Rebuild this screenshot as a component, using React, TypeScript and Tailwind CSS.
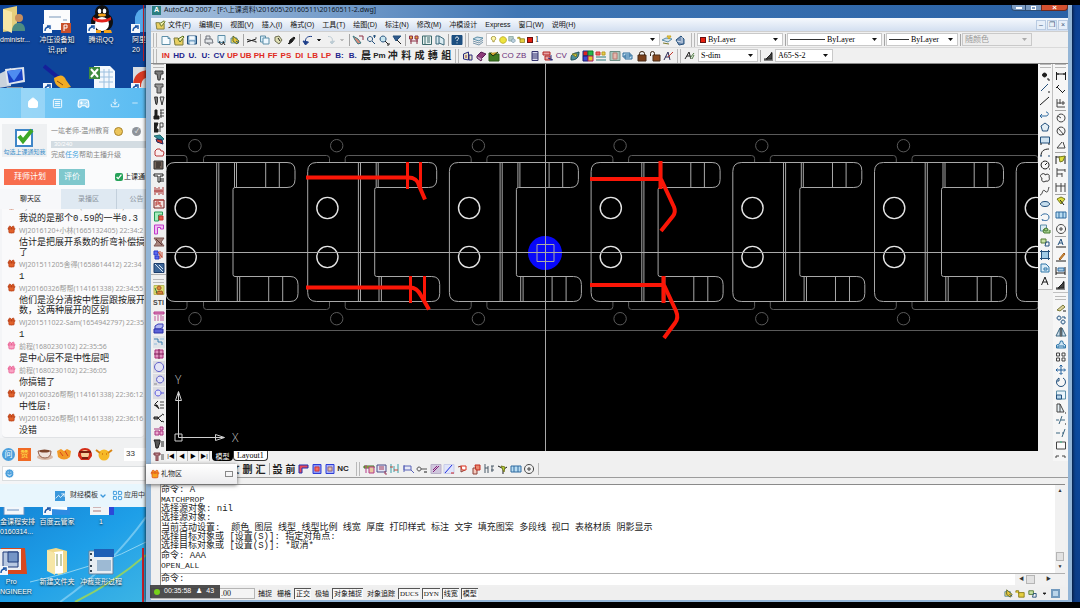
import type { ReactNode } from 'react';
import { ChevronDown, Gamepad2, Gift, House, LayoutGrid, Minus, Download, SquareMenu, TrendingUp, Smile } from 'lucide-react';

// [path, stroke, fill]
type Part = [string, string, string?];

const NAVY = '#23507c';
const INK = '#1d1d1d';
const STEEL = '#5d8fa8';
const MAROON = '#8c2f45';

const ICONS: Record<string, Part[]> = {
  // standard toolbar
  new: [['M2 2.5h6l2 2v6H2z', STEEL, '#f7fcff'], ['M8 2.5v2h2', STEEL]],
  open: [['M1 4h4l1 1h4v6H2z', '#7c7a3c', '#e8cf62'], ['M5 5l5-3 1 1-4 5z', '#59701f', '#f5f0b0']],
  save: [['M1.5 2h9v8h-9z', NAVY, '#7fa8c9'], ['M3.500 2.500h5v3h-5zM4 8h4v2H4z', '#d8e8f4', '#f4f9fd']],
  print: [['M3 5V2h4v3M2 5h7l1 4H2zM4 9l3 2', '#70757c', '#e4e7ea']],
  preview: [['M2 1.500h7v7H2z', STEEL, '#e5f3fa'], ['M4 7a2 2 0 1 0 3 0M7 8l2 3', INK]],
  publish: [['M2 4h6v5H2z', STEEL, '#f0d24c'], ['M4 2l6 5-2 3-4-3z', '#5b6b2b', '#e9c53a'], ['M7 7l3 2', NAVY]],
  cut: [['M1 5.500l9 2M1 8l9-3', INK], ['M9 4h2M9 8h2', '#666']],
  copy: [['M1.500 2h5v6h-5z', STEEL, '#d7ebf7'], ['M4 4h6v6H4z', STEEL, '#eef8ff']],
  paste: [['M3 3l4-1 3 4-3 4-4-3z', '#6d6d50', '#e0e0b4'], ['M6 4l2 3', INK]],
  brush: [['M3 10l3-3', INK, INK], ['M5 6l4-3 1 1-3 4-3 2z', INK, INK]],
  undo: [['M10 2.500C5 2 3 4 3.500 9', '#1e3f8a'], ['M1 7l2.500 4 3-3z', '#1e3f8a', '#1e3f8a']],
  redo: [['M3 2.500c4 0 5 2 4 6', '#bccbd3'], ['M9.500 7L7 10 5 8z', '#bccbd3', '#bccbd3']],
  caret: [['M4.500 5.500h3l-1.500 1.500z', INK, INK]],
  caretoff: [['M4.500 5.500h3l-1.500 1.500z', '#bbb', '#bbb']],
  pan: [['M1 2l5 3 3 4-3 1-3-4z', '#3b7a84', '#d98a7a'], ['M7 2h4v4', MAROON]],
  zoomrt: [['M5 2.500a2.500 2.500 0 1 0 .1 0M7 7l3 3M8 2h3M9.500 1v3', NAVY]],
  zoomwin: [['M5 2a3 3 0 1 0 .1 0', NAVY, '#c7e5ef'], ['M7 7l3 3M9 11h2V9', INK]],
  zoomprev: [['M2 2h8L5 7z', NAVY, '#315a8c'], ['M6 6l4 4', INK]],
  props: [['M1.500 2h3v3h-3zM7 2h3v3H7z', MAROON, '#e8aa3c'], ['M2 7h8M3 5v5M9 5v5', MAROON]],
  center: [['M1.500 2h9v8.500h-9zM4 2v8M6 4h3M6 6h3M6 8h3', '#3d6a6c', '#e6f1ef']],
  palette: [['M2 2h3v8H2zM5 2l5 3v6L5 9', '#3d6a7c', '#dcecf2']],
  help: [['M1 1.500h10v9H1z', '#1d4f80', '#1d4f80'], ['M4.500 4.500c0-2 3-2 3 0 0 1-1.500 1-1.500 2.500M6 8.500v.8', '#fff']],
  // layers
  layers: [['M1 5l4-2 6 1-4 3z', STEEL, '#cfe0ec'], ['M1 7l6 2 4-3M1 9l6 2 4-3', '#7895aa']],
  layerprev: [['M1 6l4-2 6 1-4 3z', STEEL, '#cfe0ec'], ['M2 9l6 1', '#7b7a2c'], ['M6 2l4 0-2 3z', '#c8a524', '#e8cc4a']],
  layerstate: [['M2 6l5-4 3 3v5l-5 1z', NAVY, '#7791b4'], ['M3 7l4 1M8 3v6', '#d8e3ee']],
  bulb: [['M6 2a2.500 2.500 0 0 1 1 5v2H5V7a2.500 2.500 0 0 1 1-5', '#9a8b2c', '#fff8a8']],
  sun: [['M6 2a4 4 0 1 0 .1 0', '#b5a51e', '#eee43e']],
  freeze: [['M1 2h6v6H1z', '#82a19c', '#b7cdc9'], ['M7 5a2.500 2.500 0 1 0 .1 0', '#7793a3', '#bcd2df']],
  unlock: [['M1 5V3h3v3M4 5h6v5H4z', '#8b7d1d', '#e5cf3e']],
  lock: [['M3.500 5V3.500a2.500 2 0 0 1 5 0V5', '#3b2614'], ['M2 5h8v6H2z', '#4a2d16', '#7a3f1a']],
  lockopen: [['M1.500 6V3.500a2 2 0 0 1 4 0V5', '#3b2614'], ['M4 5h7v6H4z', '#4a2d16', '#8a4a20']],
  // express row
  e1: [['M1.500 4l5-2v8l-5-1zM7 5h3v5H7z', '#2b2b7e', '#e8e3c0'], ['M4 5v3', MAROON]],
  e2: [['M2 6l4-4 5 2-5 5z', '#541b52', '#8c3a78'], ['M2 6v2l4 3 1-2', '#541b52', '#c89cc0']],
  e3: [['M1 3h3l1 1h6v7H1z', '#2c5a18', '#3f7a24'], ['M2 3l3 3 5-4', '#1a3110', '#c7a030']],
  e6: [['M3 1.500h6v9H3zM3 4h6M3 6h6M3 8h6', '#33336e', '#d9d9ee']],
  e7: [['M1 2h7v3H1zM3 6h5v4H3z', '#b02323', '#e6a0a0'], ['M9 5v6M6 8l5 2', '#282878']],
  e9: [['M2 8c0-5 5-5 8-6 0 5-2 8-8 8z', '#1e4f56', '#4a8c98'], ['M3 4h5l-1 3z', '#7a7a1e', '#dcd44c']],
  e10: [['M1 1h5v5H1z', '#16308a', '#d22'], ['M6 1h5v5H6z', '#137a2a', '#25b84a'], ['M1 6h5v5H1z', '#1b1b6a', '#3848d8'], ['M6 6h5v5H6z', '#a31864', '#e3c62a']],
  e11: [['M1 2h4v3H1z', '#c33', '#e66'], ['M7 2h3v3H7z', '#b99a22', '#e9cf46'], ['M1 7h10M1 10h10', '#2a7878']],
  e12: [['M1 1.500h10v9H1z', '#6d8f86', '#a9c6bc'], ['M4 3h4v6H4z', '#bb7b72', '#e5b8ae']],
  e13: [['M1 3h7v4H1zM3 5h7v4H3z', '#2d6a9a', '#bfe0f3']],
  astyle: [['M2 10l4-8 2 8M3.500 7h4', '#2a2a55'], ['M6 7l5-5', '#c2382c']],
  dimstyle: [['M1 9l4-7 2 7M3 6h3', INK], ['M6 8l4-5M8 9l2-4', '#4c7a3f']],
  tblstyle: [['M1 10h9M1 9h4l4-7', INK], ['M3 9l6-6v6z', INK, '#444']],
  // left column
  p1: [['M2 2h8v3H8l-1 6H5L4 5H2z', '#3a3a3a', '#7a7a7a'], ['M9 10h2', INK]],
  p2: [['M2 2h8v3H8v6H4V5H2z', '#444', '#999']],
  p3: [['M1.500 2h3v5l-1 3-1-3zM7 2h4L9 10z', '#3a3a3a', '#ddd'], ['M3 2v7', INK]],
  p4: [['M2 2h2v6h2v3H1V8h1z', INK, INK], ['M7 2h4M7 5h4M7 8h4M8 2v8', '#444']],
  p5: [['M1 2h4L3 8h2v3H1', INK, INK], ['M7 11V2h3v4H7', '#444']],
  p6: [['M1 3l6-1 4 4-3 2z', '#1e6a6a', '#2f8a9a'], ['M3 6l6 1 1 4-6-2z', '#20285e', '#c6372c']],
  p7: [['M2 9V5l2-2h3l1 2h2l1 2-1 3H3z', '#b8383a', '#fbeeee']],
  p8: [['M1 2h9v8H1z', '#333', '#75655a'], ['M3 4h5M3 6h5M3 8h4', '#1d1d1d']],
  p9: [['M1 2h9v2H7v6H5V4H1z', INK, '#fff'], ['M8 6v4M10 6v4', INK]],
  p10: [['M2 2v8M4 3v5M6 2v8M8 4v5M10 2v8M1 6h9', '#a33']],
  p11: [['M1 2h10v8H1z', '#7b2020', '#f1e2df'], ['M3 4v4M3 4h3v2H3M7 4v4h2M1 2h10', '#b93a34']],
  p12: [['M1.500 2h8v3h-4v6h-4z', '#259a55', '#a8ebbd'], ['M6 6h4v4H6z', '#c2372c', '#e65a4a']],
  p13: [['M1.500 2h9v4h-3V4.500h-3V11h-3z', '#c03ac8', '#f0bdf3']],
  p14: [['M1 2h10l-3 4 3 4H1l3-4z', '#7c5550', '#a8857e'], ['M3 3l6 6', '#5a3532']],
  p15: [['M1 2h4v4H1zM2 7h4v3H2z', '#2836c8', '#5c6af0'], ['M7 2v8M9 3v6M5 3l4 5', '#c2462f']],
  p16: [['M1 1.500h10v9H1z', '#1d3d6a', '#3d6698'], ['M2 2l8 8M6 3l4 4', '#d3e2f0']],
  q1: [['M1 1.500h10v9H1z', '#b8b858', '#dede70'], ['M6 2a2 2 0 1 0 .1 0M3 8l6-1 1 3H4z', '#a5522a', '#da8a3a'], ['M2 4l2 5', '#2f7a3a']],
  q3: [['M1 2h10v2H1z', '#b83a8c', '#d98abd'], ['M2 6v5M5 5v6M8 5v6M10 6v5', '#c25a9c']],
  q4: [['M2 3l3-2h5v3l-3 2H2z', '#3a3fb8', '#aeb4f0'], ['M1 6h9v4H1z', '#2b30a8', '#5d64d8']],
  q5: [['M0 0h12v12H0z', 'none', '#dfe3e8'], ['M1 3h4v3h4v3', '#3b7fb0'], ['M1 8h3M7 3h4', '#8fbadb']],
  q6: [['M2 2h8v8H2z', '#aa2c78', '#e092c0'], ['M1 6h10M6 1v10', '#7a1c52']],
  q7: [['M0 0h12v12H0z', 'none', '#dcdce2'], ['M6 1.500a4.500 4.500 0 1 0 .1 0', '#5a5ac8', '#e4e4f6']],
  q8: [['M0 0h12v12H0z', 'none', '#dcdce2'], ['M7 2a3.500 3.500 0 1 0 .1 0', '#5a5ac8', '#e4e4f6'], ['M1 10h3', '#888']],
  q9: [['M0 0h12v12H0z', 'none', '#dcdce2'], ['M5 3a3 3 0 1 0 .1 0M8 6h3', '#5a5ae0', '#e4e4f6']],
  q10: [['M2 5l3-3M1 6h3l2 4', INK, INK], ['M7 3h4M7 6h4M7 9h4', '#444']],
  q11: [['M1 6h4l4-3M5 6l4 4', INK], ['M1 5h4v2H1zM9 2l2 1M9 9l2 1', INK]],
  q12: [['M2 6h4v4H2zM7 2h3v3H7zM7 6h3v4H7z', '#a8347e', '#eaa9d0'], ['M1 4h5', '#a8347e']],
  q13: [['M1 2h6v2L5 10H3L2 4z', INK, '#555'], ['M8 4h3M8 6h3M8 8h3', INK]],
  q14: [['M1 2h6v2H5v6H3V4H1z', '#7a3d45', '#b9848a'], ['M8 4h3M8 6h3M8 8h3', '#555']],
  // draw
  point: [['M5.500 4a2 2 0 1 0 .1 0', INK, INK], ['M9 9v2h2', INK]],
  line: [['M2 9l7-7', NAVY], ['M9 10h2', INK]],
  line2: [['M1 10l9-8', INK]],
  pline: [['M1 8h6c3 0 3-4 0-4M3 6L1 8l2 2', '#2f6aa0']],
  polygon: [['M6 2l4 3-1.500 5h-5L2 5z', NAVY, '#e3eef5']],
  rect: [['M1.500 3h9v6h-9z', NAVY, '#cfe2f0'], ['M1 10h2M9 10h2', INK]],
  arc: [['M2 10c0-5 3-7 8-7', INK], ['M1 10h2M9 10h2', NAVY]],
  circle: [['M6 2a4 4 0 1 0 .1 0M6 6l2-2', INK], ['M10 10h1', INK]],
  cloud: [['M3 2c2-1 3 0 3 1 3-2 5 0 4 2 1 2 0 5-3 4-3 2-5 0-4-3-2-1-2-3 0-4z', '#333']],
  spline: [['M1 10c3 0 2-7 5-4s3-1 4-4', '#444']],
  ellipse: [['M6 3.500c6 0 6 5 0 5s-6-5 0-5', NAVY, '#c6deee']],
  earc: [['M2 5c1-3 8-3 8 1s-4 4-6 3M3 8l1 2', '#2f6aa0']],
  block: [['M1.500 2h6v6h-6z', STEEL, '#dcecf2'], ['M5 6a2 2 0 1 0 4 0 2 2 0 1 0-4 4h6V7', '#467a32', '#a5cf8e']],
  mkblock: [['M2 3h5v4H2z', '#557a35', '#c7e0a5'], ['M7 6h3v4H6z', NAVY]],
  hatch: [['M2.500 2.500h7v7h-7z', '#2f76a8', '#9ecae6'], ['M1 2.500h10M1 9.500h10M2.500 1v10M9.500 1v10', NAVY]],
  region: [['M2 10V2h5l3 3v5z', '#2f76a8', '#d8ebf7'], ['M5 6h3v2H5z', '#2f76a8']],
  text: [['M2.500 10L6 2l3 8M3.500 7h5', INK]],
  // dimension
  dlin: [['M1.500 2v8M10.500 2v8M2 4h8', INK], ['M3 3v2M9 3v2', INK]],
  dali: [['M2 4l6 6M1 5l3-3M7 10l3-3', INK]],
  dord: [['M2 2v8h8M5 2v5M8 4v4M2 6h8', '#444']],
  drad: [['M6 2a4 4 0 1 0 .1 0M6 6L3 4', '#444']],
  ddia: [['M6 2a4 4 0 1 0 .1 0M3 3l6 7', '#444']],
  dang: [['M2 9h8M2 9l5-6M8 3l2 6', '#444']],
  quick: [['M1 2v8M10 2v8M1 3h4', INK], ['M4 3l6-1-2 5-3 1z', '#767a1e', '#dede3c']],
  dbase: [['M2 1v9M2 3h8M2 7h5M10 2v3M7 6v4', '#444']],
  dcont: [['M1 2v9M6 2v9M10 2v9M1 5h9', '#444']],
  leader: [['M2 4l4-2 4 2-4 5z', '#767a1e', '#dede3c'], ['M5 5l4 5', INK]],
  tol: [['M1 3h10v6H1zM4 3v6M8 3v6', '#2f6aa0', '#b8dcf2']],
  cmark: [['M6 1.500a4.500 4.500 0 1 0 .1 0M6 4v4M4 6h4', '#444']],
  dedit: [['M3 8l3-6 2 6M4 6h3', NAVY], ['M1 10h10', INK]],
  dtedit: [['M1 10h10', INK], ['M4 8l5-6 1 1-5 6z', '#9c5a20', '#e8a83c']],
  dupd: [['M1 2v8M10 2v8M1 8h9', INK], ['M3 3h6v3H3z', '#2f6aa0', '#aed2ea']],
  // modify
  erase: [['M2 9l6-5 2 2-5 4z', '#7a7a3c', '#ddd39c'], ['M8 10h3', INK]],
  mcopy: [['M4 2a2 2 0 1 0 .1 0M8 6a2 2 0 1 0 .1 0M7 3h3v2', NAVY, '#e1eef6']],
  mirror: [['M5 2v8H1zM7 2v8h4z', '#3d6680', '#cfe0ec'], ['M6 1v10', INK]],
  offset: [['M1.500 9V6l3-1 1-3h2l1 3 2 1v3z', '#2f76a8', '#cfe6f5'], ['M3 9V7h6v2', '#2f76a8']],
  array: [['M1.500 2h3v3h-3zM7 2h3v3H7zM1.500 7h3v3h-3zM7 7h3v3H7z', '#444', '#f4f4f4']],
  move: [['M6 1v9M1 6h9M4.500 2.500L6 1l1.500 1.500M4.500 9L6 10.500 7.500 9M2.500 4.500L1 6l1.500 1.500M9 4.500L10.500 6 9 7.500', '#23609c']],
  rotate: [['M4 2a4.500 4.500 0 1 0 4 0M4 2v3H2', '#23507c']],
  scale: [['M1.500 2h9v8h-9z', '#5d8fa8', '#eaf5fb'], ['M1.500 6h5v4h-5z', '#23507c', '#b5d5ea']],
  stretch: [['M2 2h3v8H2zM5 2l4 8H5', '#444', '#e6f0f5'], ['M10 11h1', INK]],
  trim: [['M1 6h3M6 6h4M7 2L4 10', '#3d6680'], ['M10 10h1', INK]],
  extend: [['M1 6h4M7 6l2 0M10 2L7 10', '#3d6680']],
  brk: [['M1.500 3h9v7h-9z', '#444', '#fafafa'], ['M5 3h2', '#3b8']],
  join: [['M1 6V4h3M7 4h3v2', '#444']],
  // bottom toolbar
  b1: [['M1 10V2h9v3H4v5z', '#2030b0', '#e84a58']],
  b2: [['M2 1.500h8v9H2z', '#2e3ed8', '#8a96f2'], ['M4 4h4v4H4z', '#d83838', '#f07060']],
  b3: [['M2 1.500h8v9H2z', '#2e3ed8', '#a9b2f6'], ['M4 4h4v4H4z', '#9a6a78', '#e0c0a8']],
  b5: [['M1 3h10v2H1z', '#387028', '#c8c83c'], ['M3 2v8M6 4h5v6H6z', '#b5388a', '#e8c8a0']],
  b6: [['M1 2h9v7H1z', '#4a4a86', '#e3e3f3'], ['M3 4h5M3 6h5M9 8v3h2', '#a03a5a']],
  b7: [['M2 1v9M5 3v6M9 1v9', '#39a0a8'], ['M1 4h3M5 7h4', '#c24a3a']],
  b8: [['M1 3h7v4H1zM1 9V2M8 7l3 3', '#5a64b8', '#e7e9f7']],
  b9: [['M3 4a2 2 0 1 0 .1 0M5 6h6', '#555'], ['M8 9h3', INK]],
  b10: [['M1 1.500h10v9H1z', '#b9b0c8', '#cfc6dd'], ['M3 9l6-6M3 7l4-4', '#861e78']],
  b11: [['M1 1.500h10v9H1z', '#c9cde8', '#e0e4fa'], ['M2 10l7-8', '#1e2ee0'], ['M8 10h3', '#c22']],
  b12: [['M2 4l3-1v6l4-2', '#8a4038', '#f5dcd6'], ['M5 3h5v4H6z', '#d8301e', '#fff']],
  b13: [['M3 5h4v6H3z', '#8a4038', '#f5c9bc'], ['M5 2h5v5H6z', '#c22a1e', '#e88a70']],
  b14: [['M2 1v9M5 3v7M2 5h3M8 3h3M8 7h3M9 3v6', '#4a5a68']],
  b15: [['M1 3l6 3 3-2M6 6v5', INK], ['M4 3l4 1-1 5z', '#767a1e', '#b8d83c']],
};

function Ico({ name, size = 12 }: { name: string; size?: number }) {
  return (
    <svg width={size} height={size} viewBox="0 0 12 12" className="shrink-0" aria-hidden="true">
      {ICONS[name].map(([d, stroke, fill], i) => (
        <path key={i} d={d} stroke={stroke} fill={fill ?? 'none'} strokeWidth="1" />
      ))}
    </svg>
  );
}

function Tool({ name }: { name: string }) {
  return (
    <button
      type="button"
      aria-label={name}
      className={`flex shrink-0 items-center justify-center ${name.startsWith('caret') ? 'w-[10px]' : 'w-[13px]'}`}
    >
      <Ico name={name} />
    </button>
  );
}

// a row of tools, '|' is a separator
function Tools({ names }: { names: string[] }) {
  return (
    <>
      {names.map((n, i) =>
        n === '|' ? <span key={i} className="ml-[2px] mr-px h-3 w-px shrink-0 bg-[#a5a5a5]" /> : <Tool key={i} name={n} />
      )}
    </>
  );
}

function Grip() {
  return <span className="mx-[2px] h-[14px] w-[4px] shrink-0 border-x border-[#b9b9b9]" />;
}

function HGrip() {
  return <span className="mx-auto mb-px h-[4px] w-[11px] shrink-0 border-y border-[#b9b9b9]" />;
}

function VTools({ names, className }: { names: string[]; className: string }) {
  return (
    <div className={`flex shrink-0 flex-col items-center ${className}`}>
      {names.map((n, i) =>
        n === '|' ? (
          <span key={i} className="h-px w-[11px] shrink-0 bg-[#a5a5a5]" />
        ) : (
          <button key={i} type="button" aria-label={n} className="flex min-h-0 flex-1 items-center justify-center">
            {n === 'STI' ? <span className="text-[7px] font-bold text-[#444]">STI</span> : <Ico name={n} />}
          </button>
        )
      )}
    </div>
  );
}

interface PickerProps {
  label: string;
  value: string;
  className: string;
  lead?: ReactNode;
  disabled?: boolean;
}

function Picker({ label, value, className, lead, disabled }: PickerProps) {
  return (
    <label
      className={`flex h-[13px] shrink-0 items-center gap-[2px] border border-[#c9c9c9] px-[2px] ${disabled ? 'bg-[#eeeeee]' : 'bg-white'} ${className}`}
    >
      {lead}
      <select
        aria-label={label}
        disabled={disabled}
        className={`min-w-0 flex-1 appearance-none bg-transparent font-['Liberation_Serif','Noto_Sans_CJK_SC',serif] text-[8px] leading-[11px] ${disabled ? 'text-[#999]' : 'text-black'}`}
      >
        <option>{value}</option>
      </select>
      <svg width="5" height="3" viewBox="0 0 5 3" className="mr-[2px] shrink-0">
        <path d="M0 0h5L2.500 3z" fill={disabled ? '#aaa' : '#111'} />
      </svg>
    </label>
  );
}

const MENUS = ['文件(F)', '编辑(E)', '视图(V)', '插入(I)', '格式(O)', '工具(T)', '绘图(D)', '标注(N)', '修改(M)', '冲模设计', 'Express', '窗口(W)', '说明(H)'];

const RED = 'text-[8px] text-[#e02a20]';
const BLUE = 'text-[8px] text-[#22248c]';
const BLACK = 'text-[10px] text-[#222]';

const DIE_TOOLS: [string, string][] = [
  ['IN', RED], ['HD', BLUE], ['U.', BLUE], ['U:', BLUE], ['CV', BLUE], ['UP', RED], ['UB', RED], ['PH', RED],
  ['FF', RED], ['PS', RED], ['DI', RED], ['LB', RED], ['LP', RED], ['B:', BLUE], ['B.', BLUE], ['晨', BLACK],
  ['Pm', 'text-[8px] text-[#222]'], ['冲', BLACK], ['料', BLACK], ['成', BLACK], ['轉', BLACK], ['組', BLACK],
];

const EXPRESS_TOOLS = ['e1', 'e2', 'e3', 'CO', 'ZB', 'e6', 'e7', 'CV', 'e9', 'e10', 'e11', 'e12', 'e13', 'lock', 'lockopen', 'astyle'];

function TitleBar() {
  return (
    <header className="flex h-[13px] items-start bg-linear-to-r from-[#a9c2de] via-[#3f76b4] via-40% to-[#2a62a6]">
      <span className="ml-[1px] mt-[1px] flex h-[9px] w-[9px] items-center justify-center bg-[#2c7f80] text-[7px] font-bold text-white">A</span>
      <h1 className="ml-[3px] whitespace-nowrap font-['Noto_Sans','Noto_Sans_CJK_SC',sans-serif] text-[7px] leading-[10px] text-[#10161e]">
        AutoCAD 2007 - [F:\上课资料\201605\20160511\20160511-2.dwg]
      </h1>
      <div className="ml-auto flex h-[6px] text-white">
        <button type="button" aria-label="最小化" className="flex w-[15px] items-end justify-center rounded-bl border-x border-b border-[#2d4d74] bg-[#7c9cc2] pb-px">
          <span className="h-[2px] w-[6px] bg-white" />
        </button>
        <button type="button" aria-label="还原" className="flex w-[15px] items-center justify-center border-b border-[#2d4d74] bg-[#7c9cc2]">
          <span className="h-[4px] w-[5px] border border-white" />
        </button>
        <button type="button" aria-label="关闭" className="flex w-[27px] items-center justify-center rounded-br border-x border-b border-[#6b2a20] bg-[#d4512f] text-[8px] font-bold leading-[5px]">
          ×
        </button>
      </div>
    </header>
  );
}

function MenuBar() {
  return (
    <nav className="flex h-[13px] items-center bg-linear-to-b from-[#f6f9fd] to-[#d3dff0] pl-[4px]">
      <Ico name="open" size={11} />
      <div className="ml-[2px] flex gap-[8px] whitespace-nowrap text-[7px] leading-[12px] text-[#111]">
        {MENUS.map((m) => (
          <button key={m} type="button">{m}</button>
        ))}
      </div>
      <div className="ml-auto flex gap-px text-[7px] leading-[8px] text-[#3e5878]">
        {['–', '❐', '×'].map((g) => (
          <button key={g} type="button" className="h-[10px] w-[10px] border border-[#b9cbe2] bg-[#e7eff9]">{g}</button>
        ))}
      </div>
    </nav>
  );
}

function Toolbars() {
  return (
    <>
      <div className="flex h-4 items-center border-t border-[#cfcfcf]">
        <Grip />
        <Tools
          names={['new', 'open', 'save', '|', 'print', 'preview', 'publish', '|', 'cut', 'copy', 'paste', 'brush', '|', 'undo', 'caret', 'redo', 'caretoff', '|',
            'pan', 'zoomrt', 'zoomwin', 'zoomprev', '|', 'props', 'center', 'palette', '|', 'help']}
        />
        <Grip />
        <Tools names={['layers']} />
        <Picker
          label="图层"
          value="1"
          className="ml-[2px] w-[174px]"
          lead={
            <span className="flex items-center">
              <Ico name="bulb" size={9} />
              <Ico name="sun" size={10} />
              <Ico name="freeze" size={9} />
              <Ico name="unlock" size={9} />
              <i className="ml-px h-[6px] w-[6px] border border-[#611] bg-[#e8200f]" />
            </span>
          }
        />
        <Tools names={['layerprev', 'layerstate']} />
        <span className="w-[3px]" />
        <Grip />
        <Picker label="颜色" value="ByLayer" className="w-[86px]" lead={<i className="h-[6px] w-[6px] border border-[#611] bg-[#e8200f]" />} />
        <Tools names={['|']} />
        <Picker label="线型" value="ByLayer" className="w-[95px]" lead={<i className="h-px w-[35px] bg-[#333]" />} />
        <Tools names={['|']} />
        <Picker label="线宽" value="ByLayer" className="w-[72px]" lead={<i className="h-px w-[20px] bg-[#333]" />} />
        <Tools names={['|']} />
        <Picker label="打印样式" value="随颜色" className="w-[70px]" disabled />
      </div>
      <div className="flex h-4 items-center border-t border-[#dadada]">
        <Grip />
        <div className="flex w-[294px]">
          {DIE_TOOLS.map(([t, c], i) => (
            <button key={i} type="button" className={`w-0 flex-1 text-center font-['Liberation_Sans','Noto_Sans_CJK_SC',sans-serif] font-bold leading-[12px] ${c}`}>
              {t}
            </button>
          ))}
        </div>
        <Grip />
        <div className="flex w-[214px]">
          {EXPRESS_TOOLS.map((t) => (
            <button key={t} type="button" aria-label={t} className="flex w-[13px] flex-1 items-center justify-center text-[8px] text-[#6b2f7a]">
              {ICONS[t] ? <Ico name={t} /> : t}
            </button>
          ))}
        </div>
        <Grip />
        <Tools names={['dimstyle']} />
        <Picker label="标注样式" value="S-dim" className="ml-[2px] w-[60px]" />
        <Tools names={['|', 'tblstyle']} />
        <Picker label="文字样式" value="A65-S-2" className="w-[58px]" />
      </div>
    </>
  );
}

// one station of the strip layout
const PITCH = 141.7;
const STATIONS = [0, 1, 2, 3, 4, 5, 6];

function Station({ n }: { n: number }) {
  return (
    <g transform={`translate(${n * PITCH} 0)`} fill="none">
      <g stroke="#5a5a5a">
        <circle cx="29" cy="82.700" r="6.200" />
        <circle cx="29" cy="255.700" r="6.200" />
        <path d="M37.500 99.500v-4q0-3 3-3h120q3 0 3 3v4M37.500 238.500v5q0 3 3 3h120q3 0 3-3v-5" />
      </g>
      <g stroke="#a8a8a8">
        <path d="M9 99.500h112q8 0 8 8v9q0 8-8 8H69q-2 0-2 2v85q0 2 2 2h55q8 0 8 8v9q0 8-8 8H9q-9 0-9-9v-121q0-9 9-9z" />
        <path d="M50.700 99.500v139M52.800 99.500v139M68.500 99.500v25M70.500 99.500v25M99.700 99.500v25M113.300 99.500v25" />
        <path d="M71.300 213.500v25M73.700 213.500v25M102.700 213.500v25M116.700 213.500v25" />
      </g>
      <g stroke="#e4e4e4" strokeWidth="1.400">
        <circle cx="19.700" cy="145" r="10.600" />
        <circle cx="19.700" cy="194" r="10.600" />
      </g>
    </g>
  );
}

function Drawing() {
  return (
    <div className="relative min-h-0 flex-1 bg-black">
      <svg className="absolute inset-0 h-full w-full" viewBox="0 1 872 385" preserveAspectRatio="xMinYMin meet">
        <path d="M0 71.500h872M0 267.500h872M0 92.500h18q3 0 3 3v4M0 246.500h18q3 0 3-3v-5" stroke="#5a5a5a" fill="none" />
        {STATIONS.map((n) => (
          <Station key={n} n={n} />
        ))}
        <circle cx="379" cy="190" r="17" fill="#0808fa" />
        <path d="M379.500 0v390M0 189.500h872M371 181.500h17v17h-17z" stroke="#a9a9a9" fill="none" />
        {/* pen marks */}
        <g stroke="#fb1607" strokeWidth="4" fill="none" strokeLinejoin="round">
          <path d="M140 114.500h102c8 0 10 4 11 8l6 14" />
          <path d="M140 224.500h104c6 0 9 4 11 8l8 14" />
          <path d="M241.500 99v27M254.500 99v27M244.500 213v27M258.500 213v27" strokeWidth="3" />
          <path d="M424 116h71M494.500 98v28" />
          <path d="M495 116l13 28q2 5-1 9l-12 15" />
          <path d="M424 222h74M497.500 213v27" />
          <path d="M498 222l12 26q3 7-1 12l-11 15" />
        </g>
        <g stroke="#cfcfcf" fill="none">
          <path d="M9 371h7v7H9zM12.500 374.500V329M12.500 374.500H58M9.500 337.500l3-9 3 9zM49.500 371.500l9 3-9 3z" />
        </g>
        <g fill="#c4c4c4" fontFamily="'Open Sans', sans-serif" fontWeight="300" fontSize="12">
          <text x="9" y="321">Y</text>
          <text x="66" y="379">X</text>
        </g>
      </svg>
    </div>
  );
}

const LEFT_TOP = ['p1', 'p2', 'p3', 'p4', 'p5', 'p6', 'p7', 'p8', 'p9', 'p10', 'p11', 'p12', 'p13', 'p14', 'p15', 'p16'];
const LEFT_BOTTOM = ['q1', 'STI', 'q3', 'q4', 'q5', 'q6', 'q7', 'q8', 'q9', 'q10', 'q11', 'q12', 'q13', 'q14'];
const DRAW = ['point', 'line', 'line2', 'pline', 'polygon', 'rect', 'arc', 'circle', 'cloud', 'spline', 'ellipse', 'earc', 'block', 'mkblock', 'hatch', 'region', 'text'];
const DIMENSION = ['dlin', 'dali', 'dord', '|', 'drad', 'ddia', 'dang', '|', 'quick', 'dbase', 'dcont', '|', 'leader', 'tol', 'cmark', '|', 'dedit', 'dtedit', 'dupd', '|', 'tblstyle'];
const MODIFY = ['erase', 'mcopy', 'mirror', 'offset', 'array', 'move', 'rotate', 'scale', 'stretch', 'trim', 'extend', 'brk', 'join'];

function Workspace() {
  return (
    <div className="flex min-h-0 grow basis-0 overflow-hidden border-t border-[#8a8a8a]">
      <div className="flex w-[15px] flex-col">
        <div className="flex flex-col border-b border-[#b0b0b0]">
          <HGrip />
          <VTools names={LEFT_TOP} className="h-[205px]" />
        </div>
        <div className="flex flex-col pt-[4px]">
          <HGrip />
          <VTools names={LEFT_BOTTOM} className="h-[179px]" />
        </div>
      </div>
      <div className="flex min-w-0 flex-1 flex-col">
        <Drawing />
        <div className="flex h-[10px] shrink-0 items-stretch text-[7px] leading-[9px]">
          {['|◀', '◀', '▶', '▶|'].map((g) => (
            <button key={g} type="button" className="w-[11px] border-r border-[#bbb] bg-[#f4f4f4] text-[6px] text-black">{g}</button>
          ))}
          <button type="button" className="ml-[2px] w-[21px] rounded-b-sm bg-black text-center text-white">模型</button>
          <button type="button" className="rounded-b-sm border-x border-b border-[#333] bg-white px-[3px] font-['Liberation_Serif',serif] text-[8px] leading-[8px] text-black">Layout1</button>
        </div>
      </div>
      <div className="flex w-[30px] items-start">
        <div className="flex w-[15px] flex-col border-b border-r border-[#c0c0c0] bg-[#f6f6f6] pb-[2px]">
          <HGrip />
          <VTools names={DRAW} className="h-[218px]" />
        </div>
        <div className="flex flex-1 flex-col">
          <div className="flex flex-col border-b border-[#c0c0c0] bg-[#f6f6f6]">
            <HGrip />
            <VTools names={DIMENSION} className="h-[223px]" />
          </div>
          <div className="flex flex-col bg-[#f6f6f6] pt-[3px]">
            <HGrip />
            <VTools names={MODIFY} className="h-[163px]" />
          </div>
        </div>
      </div>
    </div>
  );
}

const BLOCK = "w-[13px] text-center font-['Noto_Sans_CJK_SC',sans-serif] text-[10px] font-bold leading-[12px] text-[#222]";

function BottomToolbar() {
  return (
    <div className="flex h-[17px] items-center border-b border-[#9c9c9c] pl-[77px]">
      {['文', '删', '汇'].map((c) => (
        <button key={c} type="button" className={BLOCK}>{c}</button>
      ))}
      <Tools names={['|']} />
      {['設', '前'].map((c) => (
        <button key={c} type="button" className={BLOCK}>{c}</button>
      ))}
      <Tools names={['b1', 'b2', 'b3']} />
      <button type="button" className="w-[14px] text-center text-[8px] font-bold text-[#222]">NC</button>
      <span className="w-[4px]" />
      <Grip />
      <div className="flex w-[174px] justify-between">
        <Tools names={['b5', 'b6', 'b7', 'b8', 'b9', 'b10', 'b11', 'b12', 'b13', 'b14', 'b15', 'tol', 'cmark']} />
      </div>
      <span className="ml-[2px] h-3 w-px bg-[#b9b9b9]" />
    </div>
  );
}

const HISTORY = [
  '命令: A',
  'MATCHPROP',
  '选择源对象: nil',
  '选择源对象:',
  '当前活动设置:  颜色 图层 线型 线型比例 线宽 厚度 打印样式 标注 文字 填充图案 多段线 视口 表格材质 阴影显示',
  '选择目标对象或 [设置(S)]: 指定对角点:',
  '选择目标对象或 [设置(S)]: *取消*',
  '命令: AAA',
  'OPEN_ALL',
];

function CommandWindow() {
  return (
    <div className="mt-[6px] ml-[9px] mr-[3px] border-l border-t border-[#8a8a8a] bg-white font-['Liberation_Mono','Noto_Sans_CJK_SC',monospace] text-[9px] text-[#222]">
      <div className="flex h-[88px]">
        <div className="flex h-[85px] min-w-0 flex-1 flex-col justify-between overflow-hidden pt-px">
          {HISTORY.map((line, i) => (
            <p key={i} className={`whitespace-pre leading-[9px] ${/^[A-Z_]+$/.test(line) ? 'text-[8px]' : ''}`}>{line}</p>
          ))}
        </div>
        <div className="flex w-[10px] flex-col items-center bg-[#f1f1f1] py-[3px] text-[5px] leading-[6px] text-[#333]">
          <span>▲</span>
          <span className="mt-auto mb-[3px] h-[9px] w-2 border border-[#b5b5b5] bg-[#e2e2e2]" />
          <span>▼</span>
        </div>
      </div>
      <div className="flex h-[12px] items-center border-t border-[#b0b0b0]">
        <label htmlFor="command">命令:</label>
        <input id="command" className="ml-1 h-[10px] min-w-0 flex-1 bg-transparent outline-none" />
        <div className="flex h-full w-[40px] items-center justify-between bg-[#f1f1f1] px-[4px] text-[5px] text-[#333]">
          <span>◀</span>
          <span className="mr-[10px] h-[9px] w-[9px] border border-[#b5b5b5] bg-[#e2e2e2]" />
          <span>▶</span>
        </div>
        <span className="w-[10px] self-stretch bg-[#f1f1f1]" />
      </div>
    </div>
  );
}

const MODES: [string, boolean][] = [
  ['捕捉', false], ['栅格', false], ['正交', true], ['极轴', false], ['对象捕捉', true],
  ['对象追踪', false], ['DUCS', true], ['DYN', true], ['线宽', true], ['模型', true],
];

function StatusBar() {
  return (
    <footer className="mt-[2px] flex h-[13px] items-center bg-[#efefef] text-[7px] text-[#111]">
      <span className="h-[11px] w-[104px] border border-[#b5b5b5] bg-[#f4f4f4] pl-[69px] font-['Liberation_Serif',serif] text-[8px] leading-[10px]">.00</span>
      <div className="ml-[1px] flex gap-[2px]">
        {MODES.map(([m, on]) => (
          <button
            key={m}
            type="button"
            className={`h-[11px] border-l border-t px-px font-['Liberation_Serif','Noto_Sans_CJK_SC',serif] leading-[10px] ${on ? 'border-[#555] bg-[#f8f8f8]' : 'border-transparent'}`}
          >
            {m}
          </button>
        ))}
      </div>
      <div className="ml-auto mr-[8px] flex items-center gap-px">
        <Ico name="publish" size={11} />
        <Ico name="unlock" size={11} />
        <Ico name="mkblock" size={11} />
        <Ico name="caret" size={11} />
        <span className="h-[9px] w-[9px] border-2 border-[#7199be] bg-[#b9d4ea]" />
      </div>
    </footer>
  );
}

function AutoCad() {
  return (
    <section className="relative flex min-w-0 flex-1 flex-col border-b-2 border-l-[5px] border-r-[4px] border-[#93b5d6] bg-[#f0f0f0] shadow-[0_0_4px_#000]">
      <TitleBar />
      <MenuBar />
      <Toolbars />
      <Workspace />
      <BottomToolbar />
      <CommandWindow />
      <StatusBar />
      <div className="absolute bottom-[116px] -left-[5px] flex h-5 w-[91px] items-center bg-linear-to-b from-white to-[#ececee] px-[4px] text-[7px] text-[#222] shadow-[0_1px_4px_#666]">
        <Gift size={10} className="shrink-0 fill-[#f6a21d] text-[#e0561b]" />
        <span className="ml-[1px]">礼物区</span>
        <button type="button" aria-label="展开" className="ml-auto h-[6px] w-2 border border-[#888]" />
      </div>
      <div className="absolute bottom-[2px] -left-px flex h-[13px] w-[70px] items-center whitespace-nowrap bg-[#3c3c3ce6] px-[4px] text-[7px] text-white">
        <span className="h-[6px] w-[6px] shrink-0 rounded-full bg-[#76d11b]" />
        <span className="ml-[4px]">00:35:58</span>
        <span className="ml-[5px]">♟</span>
        <span className="ml-[4px]">43</span>
      </div>
    </section>
  );
}

function Shortcut() {
  return (
    <g>
      <path d="M0 19h9v9H0z" fill="#f4f7fb" />
      <path d="M2 26q0-4 4-4M4 21h3v3" stroke="#1c57a8" strokeWidth="1.500" fill="none" />
    </g>
  );
}

const DESK: Record<string, ReactNode> = {
  admin: (
    <>
      <path d="M4 4l14-3v24L4 27z" fill="#e6cf7c" />
      <path d="M4 4l9 3v21l-9-4z" fill="#f6e6a6" />
      <circle cx="20" cy="13" r="4" fill="#c78e5e" />
      <path d="M13 26c0-11 14-11 13 0z" fill="#4d8c83" />
    </>
  ),
  ppt: (
    <>
      <path d="M1 5h26v20H1z" fill="#fbfcfd" />
      <path d="M6 12h12M20 15h4" stroke="#7897b9" />
      <path d="M18 18h10v10H18z" fill="#c8502b" />
      <path d="M21 26v-6h3v3h-3" stroke="#fff" fill="none" />
      <Shortcut />
    </>
  ),
  qq: (
    <>
      <ellipse cx="15" cy="17" rx="11" ry="10" fill="#111" />
      <circle cx="15" cy="7" r="7" fill="#111" />
      <ellipse cx="15" cy="19" rx="7" ry="7" fill="#fff" />
      <path d="M6 12q9 5 18 0v3q-9 5-18 0z" fill="#e3231b" />
      <ellipse cx="12.500" cy="6" rx="1.800" ry="2.500" fill="#fff" />
      <ellipse cx="17.500" cy="6" rx="1.800" ry="2.500" fill="#fff" />
      <ellipse cx="15" cy="10" rx="4" ry="1.500" fill="#f5a21b" />
      <path d="M7 25h7v3H6zM17 25h7l1 3h-8z" fill="#f5a21b" />
      <Shortcut />
    </>
  ),
  ali: (
    <>
      <path d="M4 12q2-9 12-9v24H4z" fill="#55a8ea" />
      <Shortcut />
    </>
  ),
  computer: (
    <>
      <path d="M0 10l12-6v18L0 24z" fill="#c9d2dc" />
      <path d="M6 5l19-2 1 15-18 3z" fill="#dfe5ee" />
      <path d="M8 7l15-2 1 11-14 3z" fill="#1942c4" />
      <path d="M8 7l15-2-8 12z" fill="#4f8cf0" />
      <path d="M8 23h16v3H6z" fill="#8d97a3" />
    </>
  ),
  pen: (
    <>
      <path d="M1 2l16 13" stroke="#15209a" strokeWidth="4" />
      <path d="M11 14q9-6 12 2l5 7-8 2q-9-3-9-11z" fill="#f2ac24" />
      <path d="M14 17l6 4" stroke="#8a4d10" />
      <Shortcut />
    </>
  ),
  excel: (
    <>
      <path d="M7 2h16l5 5v21H7z" fill="#f3f8fd" />
      <path d="M12 8h14M12 13h14M12 18h14M17 5v20M22 5v20" stroke="#9cc0df" />
      <path d="M2 3h11v12H2z" fill="#3e8a3e" />
      <path d="M4 5l7 8M11 5l-7 8" stroke="#fff" strokeWidth="2" />
    </>
  ),
  player: (
    <>
      <path d="M2 3h20v22H2z" fill="#d9dde2" />
      <path d="M2 22q0-16 18-16v7q-10 0-10 10z" fill="#d93a24" />
      <Shortcut />
    </>
  ),
  plan: <path d="M5 6h20v22H5zM8 14h12M8 19h12M8 23h12" stroke="#6b90c0" fill="#f3f7fb" />,
  cloud: (
    <>
      <path d="M3 6h24v22H3z" fill="#2e8be2" />
      <path d="M8 22q0-6 5-6 3-6 8 1 4 1 3 6z" fill="#fff" />
      <Shortcut />
    </>
  ),
  doc: (
    <>
      <path d="M3 6h20v22H3z" fill="#f2f4f6" />
      <path d="M6 20h8M6 24h8" stroke="#a77" />
      <path d="M22 16h5v12h-5z" fill="#2c48d8" />
    </>
  ),
  proe: (
    <>
      <path d="M2 1h24l2 26H2z" fill="#d8481e" />
      <path d="M1 2h21v21H1z" fill="#eceff4" />
      <path d="M4 5h15v15H4z" fill="#b7c8e2" stroke="#1f3b7a" />
      <path d="M9 5h10v10H9z" fill="#7595c6" stroke="#1f3b7a" />
      <Shortcut />
    </>
  ),
  folder: (
    <>
      <path d="M4 3l9-2 11 3v21l-9 3z" fill="#f0d98a" />
      <path d="M11 5l9-1v22l-9 1z" fill="#fff" />
      <path d="M4 3l8 3v22l-8-4z" fill="#f6e6a6" />
      <path d="M14 7v12M18 7v12" stroke="#8a9a55" />
    </>
  ),
  video: (
    <>
      <path d="M2 4h24v23H2z" fill="#e7edf3" stroke="#62809c" />
      <path d="M7 2h20v8H7z" fill="#1d5fb6" />
      <path d="M10 13h14v11H10z" fill="#9dbad4" />
      <path d="M3 7h2M3 13h2M3 19h2M3 24h2" stroke="#345" strokeWidth="2" />
    </>
  ),
};

interface DeskIconProps {
  icon: string;
  label: string;
  // columns that run off the desktop's edge keep their label inside
  edge?: boolean;
}

function DeskIcon({ icon, label, edge }: DeskIconProps) {
  return (
    <div className="flex w-11 shrink-0 flex-col items-center">
      <svg width="28" height="28" viewBox="0 0 28 28">{DESK[icon]}</svg>
      <span
        className={`mt-[2px] whitespace-pre text-[7px] leading-[10px] text-white [text-shadow:0_1px_2px_#000] ${edge ? 'self-start pl-[9px]' : 'text-center'}`}
      >
        {label}
      </span>
    </div>
  );
}

interface Message {
  who: string;
  text: string;
  pink?: boolean;
}

const MESSAGES: Message[] = [
  { who: 'WJ201511022-Sam(1654942797) 22:3', text: '我说的是那个0.59的一半0.3' },
  { who: 'WJ2016120+小林(1665132405) 22:34:2', text: '估计是把展开系数的折弯补偿搞\n了' },
  { who: 'WJ201511205舍得(1658614412) 22:34', text: '1' },
  { who: 'WJ20160326帮帮(114161338) 22:34:55', text: '他们是没分清按中性层跟按展开\n数，这两种展开的区别' },
  { who: 'WJ201511022-Sam(1654942797) 22:35', text: '1' },
  { who: '前程(1680230102) 22:35:56', text: '是中心层不是中性层吧', pink: true },
  { who: '前程(1680230102) 22:36:05', text: '你搞错了', pink: true },
  { who: 'WJ20160326帮帮(114161338) 22:36:12', text: '中性层!' },
  { who: 'WJ20160326帮帮(114161338) 22:36:16', text: '没错' },
];

function ChatWindow() {
  return (
    <section className="flex min-h-0 flex-1 flex-col overflow-hidden whitespace-nowrap bg-[#f4f5f7] text-[8px]">
      <header className="flex h-[30px] shrink-0 items-center bg-linear-to-r from-[#7ccbf5] to-[#5bbcf2] text-white">
        <span className="ml-[21px] flex h-full w-6 items-center justify-center bg-white/25">
          <House size={12} className="fill-white" />
        </span>
        <SquareMenu size={11} className="ml-[7px]" />
        <Gamepad2 size={13} className="ml-[14px] fill-white/40" />
        <Download size={10} className="ml-[20px]" />
        <Minus size={8} className="ml-[11px]" />
      </header>
      <div className="flex h-[45px] shrink-0 items-start gap-[4px] bg-[#fafbfc] pl-[2px] pt-[6px]">
        <div className="flex w-[45px] shrink-0 flex-col items-center bg-[#eef0f2] pt-[3px]">
          <svg width="22" height="20" viewBox="0 0 22 20">
            <path d="M2 3h16v16H2z" fill="#fff" stroke="#3f86c8" strokeWidth="2" />
            <path d="M5 9l4 5 9-11" stroke="#3da827" strokeWidth="4" fill="none" />
          </svg>
          <span className="text-[6px] leading-[10px] text-[#3b8ec9]">勾选上课通知我</span>
        </div>
        <div className="flex min-w-0 flex-1 flex-col text-[#888]">
          <div className="flex h-[14px] items-center text-[7px]">
            一竑老师-温州教育
            <span className="ml-[5px] h-[9px] w-[9px] shrink-0 rounded-full border border-[#a9842c] bg-[#ecc55b]" />
            <span className="ml-[9px] h-[9px] w-[9px] shrink-0 rounded-full bg-[#8e9399] text-center text-[6px] leading-[9px] text-white">✓</span>
          </div>
          <div className="mt-[3px] h-[7px] bg-[#d3dce2] pl-[3px] text-[6px] leading-[7px] text-white">30/240</div>
          <p className="text-[7px] leading-[13px]">
            完成<a href="#task" className="text-[#45a5dc]">任务</a>帮助主播升级
          </p>
        </div>
      </div>
      <div className="flex h-[26px] shrink-0 items-center gap-[3px] bg-[#fafbfc] pl-[4px] pt-[2px] text-white">
        <button type="button" className="h-4 w-[52px] bg-[#f86e4e]">拜师计划</button>
        <button type="button" className="h-4 w-[26px] bg-[#7fc8cd]">评价</button>
        <label className="ml-[27px] flex items-center text-[7px] text-[#222]">
          <input type="checkbox" defaultChecked className="mr-px h-[8px] w-[8px] accent-[#26a259]" />
          上课通
        </label>
      </div>
      <div className="flex h-5 shrink-0 bg-[#dfe9f2] text-[7px] text-[#8b949d]">
        <button type="button" className="w-[61px] bg-[#f7f8fa] text-[#222]">聊天区</button>
        <button type="button" className="w-14 border-r border-[#c3d0dc]">录播区</button>
        <button type="button" className="flex-1 pl-[10px]">公告</button>
      </div>
      <div className="mx-[2px] flex min-h-0 grow basis-0 flex-col justify-end overflow-hidden rounded-b border-b border-[#e0e2e5] bg-[#fafafb]">
        {MESSAGES.map((m, i) => (
          <div key={i} className="flex shrink-0 items-start">
            <Gift size={9} className={`ml-[5px] mr-[3px] shrink-0 ${m.pink ? 'fill-[#f9a4c4] text-[#e8598f]' : 'fill-[#e2622a] text-[#b53c14]'}`} />
            <div className="font-['Noto_Sans','Noto_Sans_CJK_SC',sans-serif]">
              <p className="text-[7px] leading-[12px] text-[#9a9a9a]">{m.who}</p>
              <p className="whitespace-pre py-px font-['Liberation_Mono','Noto_Sans_CJK_SC',monospace] text-[9px] leading-[10px] text-[#222]">{m.text}</p>
            </div>
          </div>
        ))}
      </div>
      <div className="flex h-[28px] shrink-0 items-center gap-[3px] bg-[#f0f1f2] pl-[2px] pt-[4px]">
        <span className="h-[13px] w-[13px] shrink-0 rounded-full bg-[#4b9fdc] text-center leading-[13px] text-white">问</span>
        <span className="h-[13px] w-[13px] shrink-0 bg-[#f06a24] text-center leading-[13px] text-[#ffe34a]">赞</span>
        <svg width="85" height="14" viewBox="0 0 85 14" className="shrink-0">
          <ellipse cx="11" cy="10" rx="8" ry="3" fill="#d8b9a6" />
          <path d="M4 4h13q0 7-6 7T4 4z" fill="#efe3dc" stroke="#94604a" />
          <ellipse cx="10.500" cy="4" rx="5" ry="1.500" fill="#7c452c" />
          <path d="M23 4l4-2 3 2 3-2 4 2-1 6q-6 5-12 0z" fill="#f29a27" />
          <path d="M26 5l3 4M31 4l3 5" stroke="#d9411c" />
          <path d="M44 9q0-8 7-8t7 8l-3 4h-8z" fill="#d42c17" />
          <circle cx="51" cy="7" r="4" fill="#f6cf9c" />
          <path d="M45 5h12M48 11h6" stroke="#7c1f10" strokeWidth="2" />
          <circle cx="70" cy="8" r="5.500" fill="#f6b926" />
          <path d="M62 3l4 3M78 3l-4 3M68 7h1M72 7h1" stroke="#d98512" strokeWidth="2" />
        </svg>
        <span className="ml-[2px] flex h-[13px] flex-1 items-center bg-white pl-[2px] text-[#333]">33</span>
      </div>
      <label className="ml-[2px] flex h-[15px] shrink-0 items-center border border-[#dadddf] bg-white pl-px">
        <Smile size={11} className="shrink-0 fill-[#4b9fdc] text-white" />
        <input aria-label="发言" className="ml-[2px] min-w-0 flex-1 outline-none" />
      </label>
      <footer className="mt-[3px] flex h-[23px] shrink-0 items-center bg-[#e8f6fd] pl-[55px] text-[7px] text-[#333]">
        <TrendingUp size={10} className="shrink-0 bg-[#3a98dc] text-white" />
        <span className="ml-[5px]">财经模板</span>
        <ChevronDown size={8} className="ml-px shrink-0 text-[#3a98dc]" strokeWidth={4} />
        <LayoutGrid size={11} className="ml-[5px] shrink-0 text-[#3a98dc]" />
        <span className="ml-px">应用中</span>
      </footer>
    </section>
  );
}

export default function App() {
  return (
    <main className="flex min-h-screen flex-col overflow-hidden bg-black pb-[6px] pt-[5px] font-['Liberation_Sans','Noto_Sans_CJK_SC',sans-serif]">
      <div className="flex min-h-0 flex-1 bg-linear-to-b from-[#0c3f92] via-[#0b55b0] to-[#0c3c86]">
        <aside className="flex w-[146px] shrink-0 flex-col overflow-hidden">
          <div className="relative -ml-[9px] h-[83px] shrink-0 overflow-hidden bg-[#0e459b]">
            <div className="flex h-[59px]">
              <DeskIcon icon="admin" label="dministr..." edge />
              <DeskIcon icon="ppt" label={'冲压设备知\n识.ppt'} />
              <DeskIcon icon="qq" label="腾讯QQ" />
              <DeskIcon icon="ali" label={'阿里\n20'} edge />
            </div>
            <div className="flex">
              <DeskIcon icon="computer" label="" />
              <DeskIcon icon="pen" label="" />
              <DeskIcon icon="excel" label="" />
              <DeskIcon icon="player" label="" />
            </div>
            <span className="absolute right-[2px] top-0 h-[56px] w-px bg-[#c8202c]" />
          </div>
          <ChatWindow />
          <div className="relative h-[95px] shrink-0 overflow-hidden bg-linear-to-br from-[#1585d6] via-[#1e9fe8] to-[#3cb4e4]">
            <svg className="absolute inset-0 h-full w-full" viewBox="0 0 146 95" preserveAspectRatio="none" fill="none">
              <path d="M60 95Q110 60 146 10" stroke="#8fd4f5" strokeWidth="2" opacity=".7" />
              <path d="M30 75Q100 60 146 35" stroke="#a7e0f5" opacity=".8" />
              <path d="M75 95Q115 75 146 48" stroke="#8ed06a" strokeWidth="2" />
              <path d="M143 41V95" stroke="#c8202c" strokeWidth="2" />
            </svg>
            <div className="relative -ml-[9px] -mt-[20px] flex h-[60px]">
              <DeskIcon icon="plan" label={'金课程安排\n0160314...'} edge />
              <DeskIcon icon="cloud" label="百度云管家" />
              <DeskIcon icon="doc" label="1" />
            </div>
            <div className="relative -ml-[9px] flex">
              <DeskIcon icon="proe" label={'   Pro\nNGINEER'} edge />
              <DeskIcon icon="folder" label="新建文件夹" />
              <DeskIcon icon="video" label="冲裁变形过程" />
            </div>
          </div>
        </aside>
        <AutoCad />
        <div className="w-2 shrink-0" />
      </div>
    </main>
  );
}
